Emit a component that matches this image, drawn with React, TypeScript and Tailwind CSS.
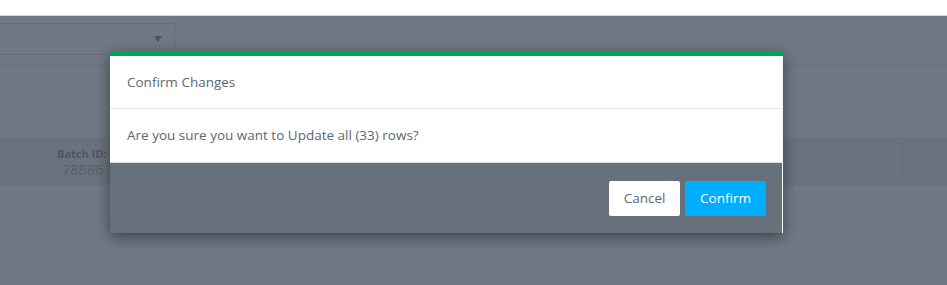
export default function App() {
  return (
    <div className="w-[947px] h-[285px] overflow-hidden bg-white font-['Open_Sans',sans-serif]">
      {/* top strip */}
      <div className="h-[16px] bg-white border-b border-[#d6d8db]" />

      {/* dimmed page */}
      <div className="relative h-[269px] bg-[#6f7884]">
        <div className="h-[50px] border-b border-[#69727d] pt-[7px]">
          <div className="w-[175px] h-[32px] border border-r-[#656e79] border-y-[#656e79] border-l-0 flex items-center justify-end pr-[12px]">
            <svg width="8" height="6" viewBox="0 0 8 6">
              <path d="M0 0 L8 0 L4 6 Z" fill="#4c5560" />
            </svg>
          </div>
        </div>

        <div className="h-[71px]" />

        <div className="h-[48px] bg-[#69727d] flex">
          <div className="w-[110px] pl-[57px] pt-[11px] leading-none">
            <div className="text-[11px] font-bold text-[#4e5762]">Batch ID:</div>
            <div className="text-[14.5px] text-[#58626d] pl-[5px] mt-[4px]">78886</div>
          </div>
          <div className="flex-1" />
          <div className="w-[1px] my-[6px] bg-[#646d78] mr-[44px]" />
        </div>

        {/* modal */}
        <div className="absolute left-[110px] top-[35px] w-[673px] shadow-[0_4px_14px_rgba(0,0,0,0.45)]">
          <div className="h-[5px] bg-[#00a651]" />
          <div className="bg-white border-r border-[#f5f5f5]">
            <div className="h-[53px] flex items-center px-[17px] border-b border-[#e4e6e8] text-[13.5px] text-[#5d6772]">
              Confirm Changes
            </div>
            <div className="h-[54px] flex items-center px-[17px] text-[13.5px] text-[#5d6772] border-b border-[#dcdfe2]">
              Are you sure you want to Update all (33) rows?
            </div>
          </div>
          <div className="h-[70px] bg-[#67717c] border-r border-white flex items-start justify-end gap-[5px] pt-[18px] pr-[16px]">
            <button className="w-[71px] h-[35px] bg-white rounded-[2px] text-[13.5px] text-[#5d6772]">
              Cancel
            </button>
            <button className="w-[81px] h-[35px] bg-[#00aeff] rounded-[2px] text-[13.5px] text-white">
              Confirm
            </button>
          </div>
        </div>
      </div>
    </div>
  );
}
